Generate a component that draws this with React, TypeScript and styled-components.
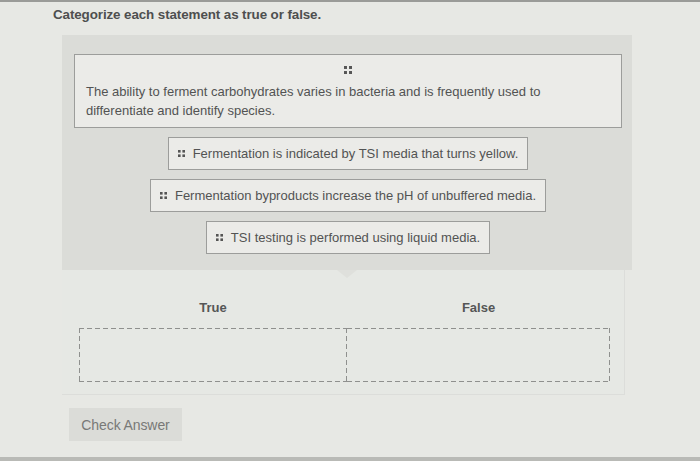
import React from "react";
import styled, { createGlobalStyle } from "styled-components";

const Global = createGlobalStyle`
  html, body { margin: 0; padding: 0; }
  body {
    background: #e7e8e4;
    font-family: "Liberation Sans", Arial, sans-serif;
    width: 700px;
    height: 461px;
    overflow: hidden;
  }
`;

const Page = styled.div`
  height: 461px;
  box-sizing: border-box;
  border-top: 2px solid #9a9b98;
  padding: 4px 0 0 53px;
  display: flex;
  flex-direction: column;
  position: relative;
`;

const Title = styled.h1`
  margin: 0;
  font-size: 13.4px;
  font-weight: bold;
  color: #4e4f4f;
  line-height: 18px;
  letter-spacing: -0.1px;
`;

const Panel = styled.div`
  margin: 11px 0 0 9px;
  width: 570px;
  box-sizing: border-box;
  background: #dbdcd8;
  padding: 19px 10px 16px 12px;
  display: flex;
  flex-direction: column;
  align-items: center;
  gap: 9px;
  position: relative;
  &::after {
    content: "";
    position: absolute;
    left: 275px;
    bottom: -8px;
    border-left: 10px solid transparent;
    border-right: 10px solid transparent;
    border-top: 8px solid #dfe0dc;
  }
`;

const BigCard = styled.div`
  align-self: stretch;
  height: 74px;
  box-sizing: border-box;
  background: #ebebe8;
  border: 1px solid #9c9d9b;
  padding: 11px 40px 0 11px;
  display: flex;
  flex-direction: column;
`;

const CardHandle = styled.div`
  display: flex;
  justify-content: center;
  padding-left: 29px;
  height: 8px;
  margin-bottom: 8px;
`;

const CardText = styled.div`
  font-size: 13px;
  line-height: 19px;
  color: #525353;
`;

const Item = styled.div`
  height: 33px;
  box-sizing: border-box;
  background: #ebebe8;
  border: 1px solid #9c9d9b;
  padding: 0 9px 0 9px;
  display: flex;
  align-items: center;
  gap: 8px;
  font-size: 13px;
  color: #525353;
  white-space: nowrap;
`;

const Drop = styled.div`
  margin: 0 0 0 9px;
  width: 563px;
  height: 125px;
  box-sizing: border-box;
  background: #e6e8e4;
  border-right: 1px solid #dcddda;
  border-bottom: 1px solid #dcddda;
  padding: 30px 0 0 17px;
`;

const Columns = styled.div`
  display: grid;
  grid-template-columns: 268px 263px;
`;

const Column = styled.div`
  display: flex;
  flex-direction: column;
  align-items: center;
`;

const Label = styled.div`
  font-size: 13px;
  font-weight: bold;
  color: #555656;
  line-height: 16px;
  height: 16px;
  margin-bottom: 12px;
`;

const dash = "#8f908e";

const DashBox = styled.div<{ $first?: boolean }>`
  align-self: stretch;
  height: 54px;
  box-sizing: border-box;
  background-image:
    repeating-linear-gradient(to right, ${dash} 0 5px, transparent 5px 8px),
    repeating-linear-gradient(to right, ${dash} 0 5px, transparent 5px 8px),
    repeating-linear-gradient(to bottom, ${dash} 0 5px, transparent 5px 8px),
    repeating-linear-gradient(to bottom, ${dash} 0 5px, transparent 5px 8px);
  background-size: 100% 1px, 100% 1px, 1px 100%, ${(p) => (p.$first ? "1px 100%" : "0 0")};
  background-position: left top, left bottom, right top, left top;
  background-repeat: no-repeat;
`;

const Button = styled.button`
  margin: 13px 0 0 16px;
  width: 113px;
  height: 33px;
  border: none;
  background: #dbdcd8;
  color: #787977;
  font-family: "Liberation Sans", Arial, sans-serif;
  font-size: 14px;
  letter-spacing: -0.1px;
  text-align: center;
  padding: 0;
`;

const Footer = styled.div`
  position: absolute;
  left: 0;
  right: 0;
  bottom: 0;
  height: 4px;
  background: #b9bab6;
`;

const Grip = ({ size = 7 }: { size?: number }) => (
  <svg width={size} height={size} viewBox="0 0 7 7">
    <rect x="0" y="0" width="2.6" height="2.6" fill="#555" />
    <rect x="4.4" y="0" width="2.6" height="2.6" fill="#555" />
    <rect x="0" y="4.4" width="2.6" height="2.6" fill="#555" />
    <rect x="4.4" y="4.4" width="2.6" height="2.6" fill="#555" />
  </svg>
);

const items = [
  "Fermentation is indicated by TSI media that turns yellow.",
  "Fermentation byproducts increase the pH of unbuffered media.",
  "TSI testing is performed using liquid media.",
];

export default function App() {
  return (
    <>
      <Global />
      <Page>
        <Title>Categorize each statement as true or false.</Title>
        <Panel>
          <BigCard>
            <CardHandle>
              <Grip size={8} />
            </CardHandle>
            <CardText>
              The ability to ferment carbohydrates varies in bacteria and is frequently used to
              differentiate and identify species.
            </CardText>
          </BigCard>
          {items.map((t) => (
            <Item key={t}>
              <Grip />
              {t}
            </Item>
          ))}
        </Panel>
        <Drop>
          <Columns>
            <Column>
              <Label>True</Label>
              <DashBox $first />
            </Column>
            <Column>
              <Label>False</Label>
              <DashBox />
            </Column>
          </Columns>
        </Drop>
        <Button>Check Answer</Button>
        <Footer />
      </Page>
    </>
  );
}
